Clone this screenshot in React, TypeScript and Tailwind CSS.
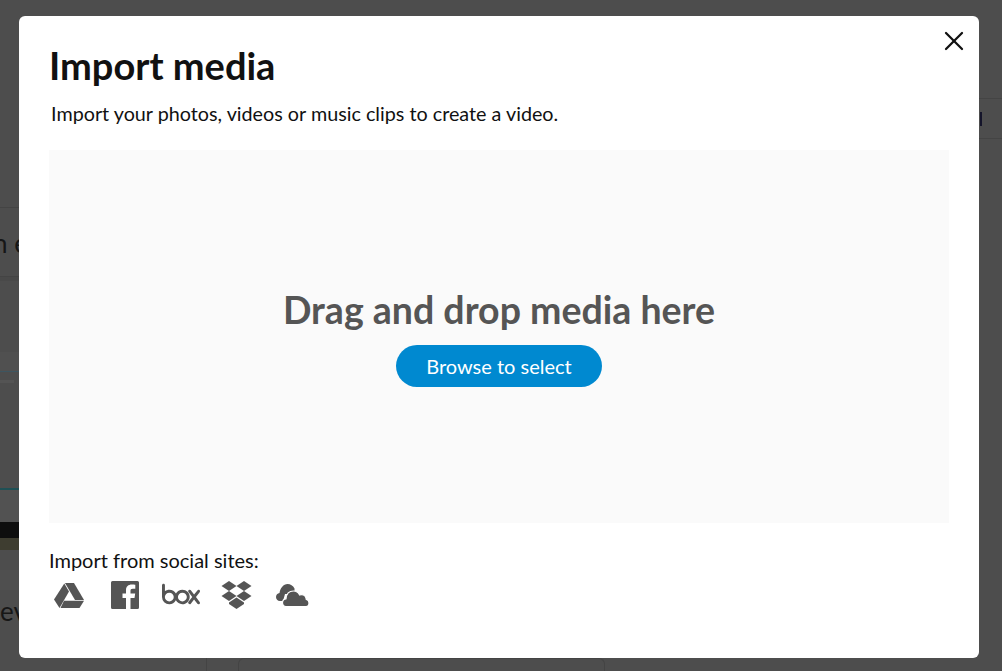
import { X } from "lucide-react";
import { SiBox } from "react-icons/si";

function DriveIcon() {
  return (
    <svg width="30" height="25" viewBox="0 0 30 25" fill="#555" className="ml-[5px]">
      <path d="M11 0H20L30 17H21Z" />
      <path d="M10.300 .6L15 8.500L5.500 25L0 16.500Z" />
      <path d="M10 17.700H30L25.500 25H6.500Z" />
    </svg>
  );
}

function FacebookIcon() {
  return (
    <svg width="28" height="28" viewBox="0 0 28 28" fill="#555" className="ml-[27px]">
      <path
        fillRule="evenodd"
        d="M1.500 0H26.500A1.500 1.500 0 0 1 28 1.500V26.500A1.500 1.500 0 0 1 26.500 28H19.500V17H23.500L24.200 12.500H19.500V9.700C19.500 8.400 20 7.700 21.700 7.700H24.300V3.800C23.800 3.700 22.400 3.600 20.800 3.600C17.300 3.600 15 5.700 15 9.200V12.500H11.500V17H15V28H1.500A1.500 1.500 0 0 1 0 26.500V1.500A1.500 1.500 0 0 1 1.500 0Z"
      />
    </svg>
  );
}

function DropboxIcon() {
  return (
    <svg width="31" height="28" viewBox="0 0 31 28" fill="#555" className="ml-[21px]">
      <path d="M8 0L15.500 5L8 10L.5 5Z" />
      <path d="M23 0L30.500 5L23 10L15.500 5Z" />
      <path d="M8 10L15.500 15L8 20L.5 15Z" />
      <path d="M23 10L30.500 15L23 20L15.500 15Z" />
      <path d="M8 21.500L15.500 16.500L23 21.500V23L15.500 28L8 23Z" />
    </svg>
  );
}

function OneDriveIcon() {
  return (
    <svg width="34" height="23" viewBox="0 0 34 23" fill="#555" className="ml-[23px]">
      <path d="M8 17H5C2.500 17 1 15.200 1 13C1 10.800 2.500 9.200 4.500 9C5.200 4 8.500 0 12.500 0C15.500 0 18 1.500 19.500 4.500L19.500 10H10Z" />
      <path
        stroke="#fff"
        strokeWidth="1.200"
        d="M11 22.500C9 22.500 7.500 20.800 7.500 18.800C7.500 16.800 9 15 11 14.800C11.400 10 14.400 7 18.500 7C21.300 7 23.400 8.500 24.600 10.900C25.200 10.700 26 10.600 26.600 10.600C29 10.600 31 12.800 31.300 15.400C33 15.700 34 17.200 34 18.900C34 21 32.700 22.500 31 22.500Z"
      />
    </svg>
  );
}

export default function App() {
  return (
    <div className="relative h-screen w-full overflow-hidden bg-[#4d4d4d] font-['Lato',sans-serif]">
      {/* Page behind the overlay */}
      <div className="flex h-full w-[19px] flex-col pt-[207px]">
        <div className="flex h-[70px] items-center whitespace-nowrap border-y border-[#444] pl-[2px] pt-[3px] text-[26px] text-[#161616]">
          <span className="ml-[-9px]">n e</span>
        </div>
        <div className="h-[4px] bg-[#494949]"></div>
        <div className="mt-[71px] h-[20px] border-b border-[#3d5560] bg-[#505050]"></div>
        <div className="mt-[8px] h-[3px] w-[14px] bg-[#545454]"></div>
        <div className="mt-[105px] h-[2px] bg-[#1f5055]"></div>
        <div className="h-[32px] bg-[#525252]"></div>
        <div className="h-[16px] bg-[#0e0e0e]"></div>
        <div className="h-[12px] bg-[#3e3d30]"></div>
        <div className="mt-[20px] h-[20px] bg-[#4f4f4f]"></div>
        <div className="mt-[4px] whitespace-nowrap text-[26px] leading-[34px] text-[#161616]">ev</div>
      </div>

      {/* Right edge of the page */}
      <div className="absolute right-0 top-[98px] flex h-[41px] w-[23px] items-center border-y border-[#444] pl-[1px]">
        <div className="h-[14px] w-[2px] bg-[#14142a]"></div>
      </div>

      {/* Cards peeking out below the modal */}
      <div className="absolute bottom-0 left-[206px] flex h-[13px] items-end">
        <div className="h-full w-[32px] border-l border-[#444]"></div>
        <div className="h-full w-[367px] rounded-t-[6px] border-x border-t border-[#444]"></div>
      </div>

      {/* Modal */}
      <div className="absolute left-[19px] top-[16px] h-[642px] w-[960px] rounded-[6px] bg-white px-[30px] pt-[25px]">
        <button className="absolute right-[9px] top-[9px] text-[#111]">
          <X size={32} strokeWidth={1.7} />
        </button>
        <h1 className="text-[38px] font-bold leading-[48px] text-[#111]">Import media</h1>
        <p className="ml-[2px] mt-[13px] text-[19.75px] leading-[24px] text-[#111]">
          Import your photos, videos or music clips to create a video.
        </p>
        <div className="mt-[24px] flex h-[373px] w-[900px] flex-col items-center bg-[#fafafa] pt-[136px]">
          <h2 className="text-[37.5px] font-bold leading-[48px] text-[#555]">Drag and drop media here</h2>
          <button className="mt-[11px] flex h-[42px] w-[206px] items-center justify-center rounded-full bg-[#0089d0] text-[20px] text-white">
            Browse to select
          </button>
        </div>
        <p className="mt-[25px] text-[20px] leading-[24px] text-[#111]">Import from social sites:</p>
        <div className="mt-[9px] flex h-[28px] items-center">
          <DriveIcon />
          <FacebookIcon />
          <SiBox size={38} color="#555" className="ml-[23px] mt-[-3px]" />
          <DropboxIcon />
          <OneDriveIcon />
        </div>
      </div>
    </div>
  );
}
